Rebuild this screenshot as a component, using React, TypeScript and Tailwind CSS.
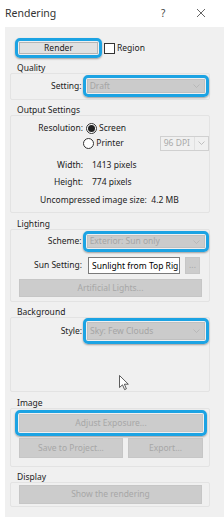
import React from "react";

const font = { fontFamily: '"Noto Sans", "Open Sans", sans-serif' };

function Glow({ className = "", children }: { className?: string; children: React.ReactNode }) {
  return (
    <div
      className={`border-[3px] border-[#1ca3e3] rounded-[5px] p-px shadow-[0_1px_2px_rgba(0,0,0,0.35)] ${className}`}
    >
      {children}
    </div>
  );
}

function DisabledCombo({ text, h = "h-[14px]" }: { text: string; h?: string }) {
  return (
    <div className={`flex ${h} items-center justify-between bg-[#cbcbcb] border border-[#c0c0c0] pl-[2px] pr-[4px]`}>
      <span className="text-[8.5px] leading-none text-[#a5a5a5]">{text}</span>
      <svg width="7" height="4" viewBox="0 0 7 4" className="text-[#b3b3b3]">
        <path d="M0.5 0.5 L3.5 3.5 L6.5 0.5" fill="none" stroke="currentColor" strokeWidth="0.8" />
      </svg>
    </div>
  );
}

function DisabledButton({ label, className = "" }: { label: string; className?: string }) {
  return (
    <div
      className={`flex items-center justify-center bg-[#cccccc] border border-[#c6c6c6] text-[8.5px] leading-none text-[#a7a7a7] ${className}`}
    >
      {label}
    </div>
  );
}

function Group({ title, className = "", children }: { title: string; className?: string; children?: React.ReactNode }) {
  return (
    <div className="flex flex-col">
      <div className="h-[10px] pl-[12px] text-[8.5px] leading-[10px] text-[#222]">{title}</div>
      <div className={`relative ml-[5px] w-[200px] border border-[#e3e3e3] rounded-[2px] ${className}`}>{children}</div>
    </div>
  );
}

function Radio({ checked }: { checked?: boolean }) {
  return (
    <span className="flex h-[11px] w-[11px] items-center justify-center rounded-full border border-[#333] bg-white">
      {checked && <span className="h-[7px] w-[7px] rounded-full bg-[#222]" />}
    </span>
  );
}

export default function App() {
  return (
    <div className="w-[224px] h-[522px] bg-white overflow-hidden select-none" style={font}>
      {/* title bar */}
      <div className="relative flex h-[27px] items-center pl-[5px]">
        <span className="text-[10.5px] text-[#333]">Rendering</span>
        <span className="absolute left-[161px] top-[6px] text-[10px] text-[#444]">?</span>
        <svg className="absolute left-[196px] top-[8px]" width="10" height="10" viewBox="0 0 10 10">
          <path d="M1 1 L9 9 M9 1 L1 9" stroke="#555" strokeWidth="0.9" />
        </svg>
      </div>

      <div className="ml-[5px] h-[490px] w-[219px] bg-[#f0f0f0] text-[#222]">
        {/* render row */}
        <div className="flex items-center pt-[11px] pl-[10px] h-[31px]">
          <Glow className="w-[87px] h-[20px]">
            <div className="flex h-full items-center justify-center bg-[#e1e1e1] border border-[#b5b5b5] text-[8.5px] leading-none">
              Render
            </div>
          </Glow>
          <span className="ml-[2px] h-[11px] w-[11px] border border-[#333] bg-white" />
          <span className="ml-[2px] text-[8.5px] leading-none">Region</span>
        </div>

        <div className="h-[5px]" />
        <Group title="Quality" className="h-[27px]">
          <div className="flex items-center pt-px">
            <span className="w-[73px] pr-[2px] text-right text-[8.5px] leading-none">Setting:</span>
            <Glow className="-ml-[1px] w-[127px] h-[22px]">
              <DisabledCombo text="Draft" h="h-full" />
            </Glow>
          </div>
        </Group>

        <div className="h-[5px]" />
        <Group title="Output Settings" className="h-[98px]">
          <div className="flex flex-col text-[8.5px] leading-none">
            <div className="flex h-[12px] items-center mt-[6px]">
              <span className="w-[72px] text-right">Resolution:</span>
              <span className="ml-[3px]"><Radio checked /></span>
              <span className="ml-[2px]">Screen</span>
            </div>
            <div className="flex h-[16px] items-center mt-[1px]">
              <span className="w-[72px]" />
              <span className="ml-[3px]"><Radio /></span>
              <span className="ml-[2px]">Printer</span>
              <div className="ml-[36px] flex h-[15px] w-[51px] items-center justify-between border border-[#d0d0d0] bg-[#f0f0f0] pl-[3px]">
                <span className="text-[#a9a9a9]">96 DPI</span>
                <span className="flex h-full items-center border-l border-[#e0e0e0] px-[3px]">
                  <svg width="7" height="4" viewBox="0 0 7 4">
                    <path d="M0.5 0.5 L3.5 3.5 L6.5 0.5" fill="none" stroke="#b3b3b3" strokeWidth="0.8" />
                  </svg>
                </span>
              </div>
            </div>
            <div className="flex h-[12px] items-center mt-[8px]">
              <span className="w-[72px] text-right">Width:</span>
              <span className="ml-[9px]">1413 pixels</span>
            </div>
            <div className="flex h-[12px] items-center mt-[5px]">
              <span className="w-[72px] text-right">Height:</span>
              <span className="ml-[9px]">774 pixels</span>
            </div>
            <div className="flex h-[12px] items-center mt-[6px] pl-[29px]">
              Uncompressed image size:&nbsp;&nbsp;4.2 MB
            </div>
          </div>
        </Group>

        <div className="h-[6px]" />
        <Group title="Lighting" className="h-[73px]">
          <div className="flex items-center pt-px">
            <span className="w-[73px] pr-[2px] text-right text-[8.5px] leading-none">Scheme:</span>
            <Glow className="-ml-[1px] w-[127px] h-[21px]">
              <DisabledCombo text="Exterior: Sun only" h="h-full" />
            </Glow>
          </div>
          <div className="mt-[5px] flex items-center">
            <span className="w-[73px] pr-[2px] text-right text-[8.5px] leading-none">Sun Setting:</span>
            <div className="ml-[4px] h-[17px] w-[92px] overflow-hidden border border-[#7a7a7a] bg-white pl-[3px] pr-px">
              <div className="h-full overflow-hidden whitespace-nowrap text-[8.5px] leading-[15px] text-black">
                Sunlight from Top Right
              </div>
            </div>
            <DisabledButton label="..." className="ml-[5px] h-[17px] w-[15px]" />
          </div>
          <DisabledButton label="Artificial Lights..." className="ml-[8px] mt-[5px] h-[18px] w-[183px]" />
        </Group>

        <div className="h-[5px]" />
        <Group title="Background" className="h-[75px]">
          <div className="flex items-center">
            <span className="w-[73px] pr-[2px] text-right text-[8.5px] leading-none">Style:</span>
            <Glow className="-ml-[1px] w-[126px] h-[26px]">
              <DisabledCombo text="Sky: Few Clouds" h="h-full" />
            </Glow>
          </div>
          <svg className="absolute left-[108px] top-[57px]" width="10" height="16" viewBox="0 0 10 16">
            <path d="M0.5 0.5 L0.5 12.5 L3.5 9.8 L5.6 14.6 L7.4 13.8 L5.4 9.2 L9.3 9.2 Z" fill="white" stroke="#333" strokeWidth="0.8" />
          </svg>
        </Group>

        <div className="h-[6px]" />
        <Group title="Image" className="h-[59px]">
          <Glow className="ml-[4px] mt-[1px] w-[192px] h-[26px]">
            <DisabledButton label="Adjust Exposure..." className="h-full w-full" />
          </Glow>
          <div className="ml-[8px] mt-[2px] flex">
            <DisabledButton label="Save to Project..." className="h-[20px] w-[104px]" />
            <DisabledButton label="Export..." className="ml-[5px] h-[20px] w-[75px]" />
          </div>
        </Group>

        <div className="h-[5px]" />
        <Group title="Display" className="h-[25px]">
          <DisabledButton label="Show the rendering" className="ml-[8px] mt-[2px] h-[19px] w-[183px]" />
        </Group>
      </div>
    </div>
  );
}
